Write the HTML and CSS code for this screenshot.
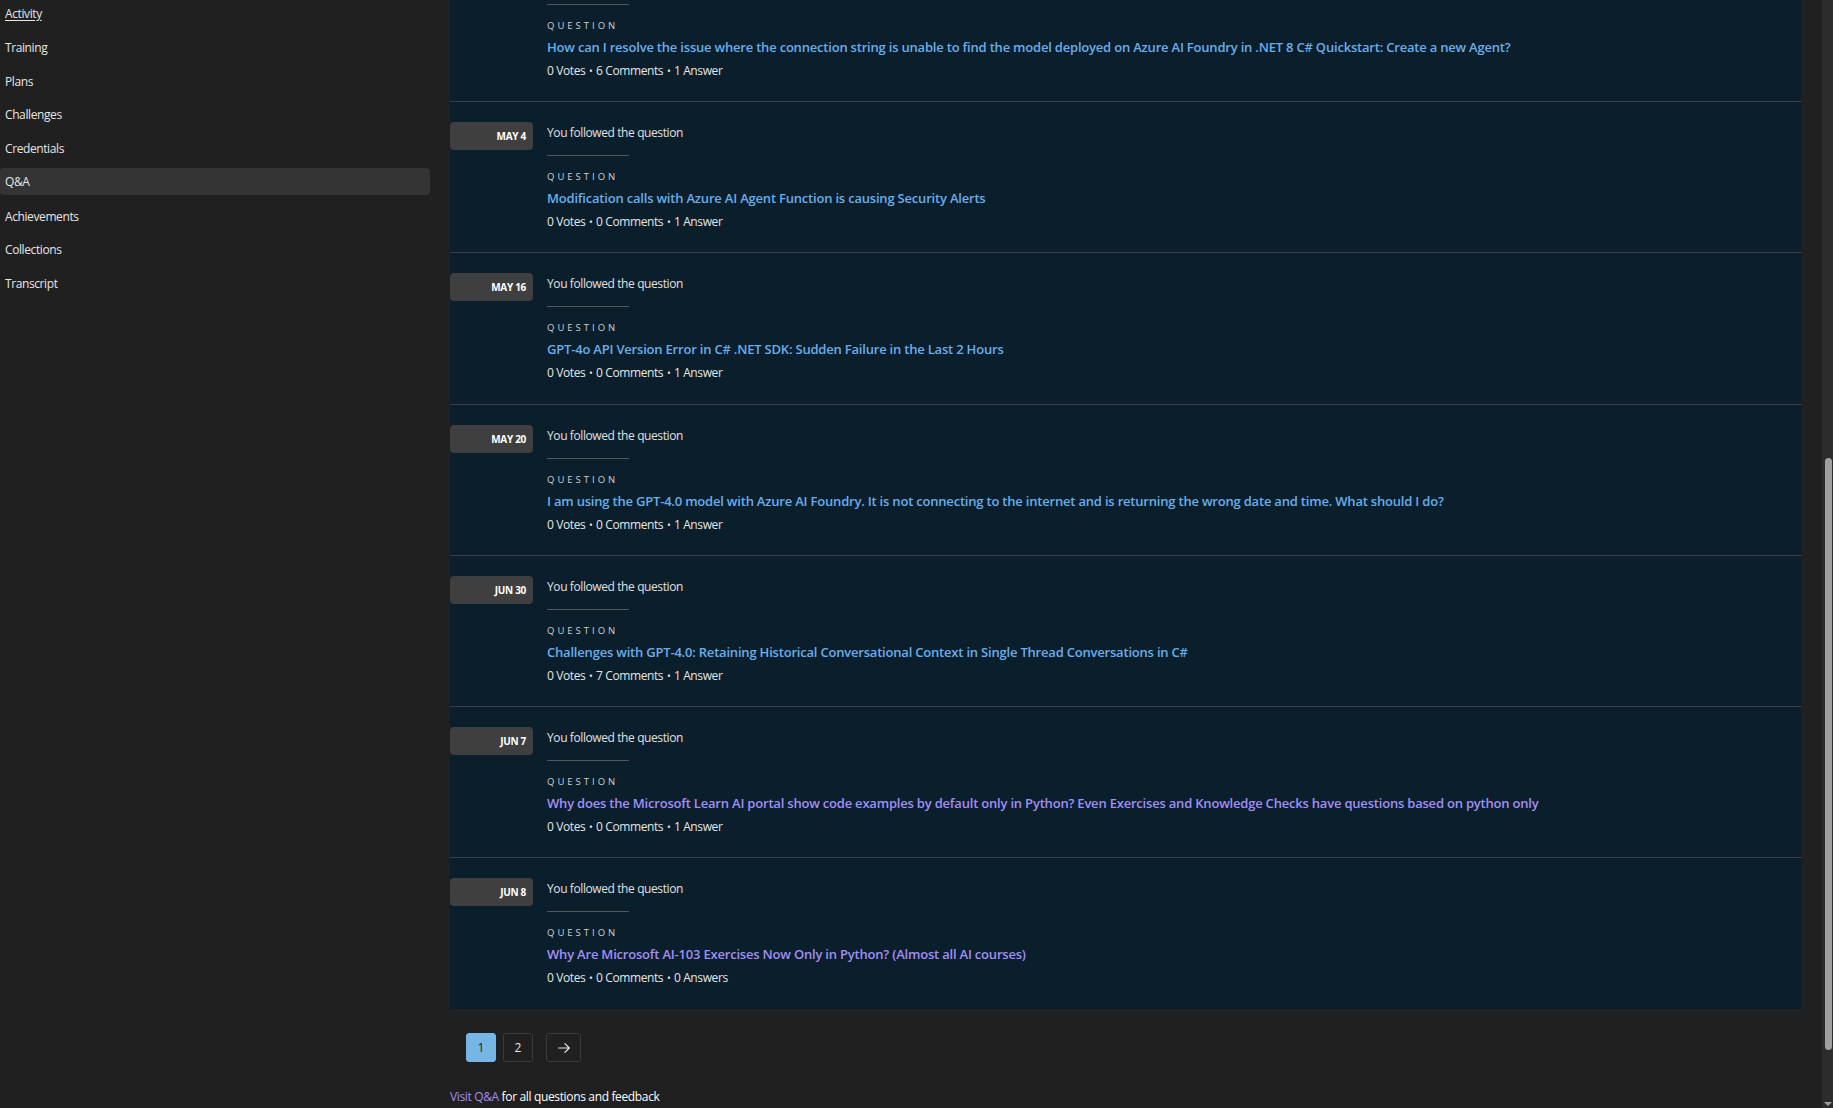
FILE: index.html
```html
<!DOCTYPE html>
<html lang="en">
<head>
  <meta charset="UTF-8" />
  <meta name="viewport" content="width=device-width, initial-scale=1.0" />
  <title>Q&amp;A Activity</title>
  <link rel="stylesheet" href="styles.css">
</head>
<body>
  <div class="layout">
    <nav class="side-nav">
      <a class="nav-item current" href="#">Activity</a>
      <a class="nav-item" href="#">Training</a>
      <a class="nav-item" href="#">Plans</a>
      <a class="nav-item" href="#">Challenges</a>
      <a class="nav-item" href="#">Credentials</a>
      <a class="nav-item selected" href="#">Q&amp;A</a>
      <a class="nav-item" href="#">Achievements</a>
      <a class="nav-item" href="#">Collections</a>
      <a class="nav-item" href="#">Transcript</a>
    </nav>

    <main class="main">
      <ul class="activity-list">
        <li class="activity">
          <div class="date-badge">MAY 1</div>
          <div class="activity-body">
            <p class="activity-action">You followed the question</p>
            <hr class="divider" />
            <p class="item-type">Question</p>
            <a class="item-title" href="#">How can I resolve the issue where the connection string is unable to find the model deployed on Azure AI Foundry in .NET 8 C# Quickstart: Create a new Agent?</a>
            <p class="item-stats">0 Votes <span class="dot">•</span> 6 Comments <span class="dot">•</span> 1 Answer</p>
          </div>
        </li>
        <li class="activity">
          <div class="date-badge">MAY 4</div>
          <div class="activity-body">
            <p class="activity-action">You followed the question</p>
            <hr class="divider" />
            <p class="item-type">Question</p>
            <a class="item-title" href="#">Modification calls with Azure AI Agent Function is causing Security Alerts</a>
            <p class="item-stats">0 Votes <span class="dot">•</span> 0 Comments <span class="dot">•</span> 1 Answer</p>
          </div>
        </li>
        <li class="activity">
          <div class="date-badge">MAY 16</div>
          <div class="activity-body">
            <p class="activity-action">You followed the question</p>
            <hr class="divider" />
            <p class="item-type">Question</p>
            <a class="item-title" href="#">GPT-4o API Version Error in C# .NET SDK: Sudden Failure in the Last 2 Hours</a>
            <p class="item-stats">0 Votes <span class="dot">•</span> 0 Comments <span class="dot">•</span> 1 Answer</p>
          </div>
        </li>
        <li class="activity">
          <div class="date-badge">MAY 20</div>
          <div class="activity-body">
            <p class="activity-action">You followed the question</p>
            <hr class="divider" />
            <p class="item-type">Question</p>
            <a class="item-title" href="#">I am using the GPT-4.0 model with Azure AI Foundry. It is not connecting to the internet and is returning the wrong date and time. What should I do?</a>
            <p class="item-stats">0 Votes <span class="dot">•</span> 0 Comments <span class="dot">•</span> 1 Answer</p>
          </div>
        </li>
        <li class="activity">
          <div class="date-badge">JUN 30</div>
          <div class="activity-body">
            <p class="activity-action">You followed the question</p>
            <hr class="divider" />
            <p class="item-type">Question</p>
            <a class="item-title" href="#">Challenges with GPT-4.0: Retaining Historical Conversational Context in Single Thread Conversations in C#</a>
            <p class="item-stats">0 Votes <span class="dot">•</span> 7 Comments <span class="dot">•</span> 1 Answer</p>
          </div>
        </li>
        <li class="activity">
          <div class="date-badge">JUN 7</div>
          <div class="activity-body">
            <p class="activity-action">You followed the question</p>
            <hr class="divider" />
            <p class="item-type">Question</p>
            <a class="item-title visited" href="#">Why does the Microsoft Learn AI portal show code examples by default only in Python? Even Exercises and Knowledge Checks have questions based on python only</a>
            <p class="item-stats">0 Votes <span class="dot">•</span> 0 Comments <span class="dot">•</span> 1 Answer</p>
          </div>
        </li>
        <li class="activity">
          <div class="date-badge">JUN 8</div>
          <div class="activity-body">
            <p class="activity-action">You followed the question</p>
            <hr class="divider" />
            <p class="item-type">Question</p>
            <a class="item-title visited" href="#">Why Are Microsoft AI-103 Exercises Now Only in Python? (Almost all AI courses)</a>
            <p class="item-stats">0 Votes <span class="dot">•</span> 0 Comments <span class="dot">•</span> 0 Answers</p>
          </div>
        </li>
      </ul>

      <nav class="pagination">
        <a class="page-btn active" href="#">1</a>
        <a class="page-btn" href="#">2</a>
        <a class="page-btn next" href="#" aria-label="Next page">
          <svg width="14" height="14" viewBox="0 0 16 16" fill="none" stroke="currentColor" stroke-width="1.4" stroke-linecap="round" stroke-linejoin="round">
            <path d="M2 8h12M9 3l5 5-5 5" />
          </svg>
        </a>
      </nav>

      <p class="footer-note"><a class="visited" href="#">Visit Q&amp;A</a> for all questions and feedback</p>
    </main>
  </div>

  <div class="scrollbar">
    <div class="scroll-thumb"></div>
    <div class="scroll-arrow"></div>
  </div>
</body>
</html>
```

FILE: styles.css
```css
body {
  font-family: "Segoe UI", "Open Sans", sans-serif;
  margin: 0;
  padding: 0;
  background: #202020;
  color: #e6e6e6;
  height: 100vh;
  overflow: hidden;
}

a {
  text-decoration: none;
}

.layout {
  display: flex;
  gap: 20px;
  width: 1802px;
}

/* Side navigation */
.side-nav {
  width: 430px;
  flex-shrink: 0;
  display: flex;
  flex-direction: column;
  gap: 6.75px;
}

.nav-item {
  display: flex;
  align-items: center;
  height: 27px;
  padding: 0 5px;
  border-radius: 4px;
  color: #e6e6e6;
  font-size: 12px;
  letter-spacing: -0.4px;
}

.nav-item.current {
  text-decoration: underline;
  text-underline-offset: 2px;
}

.nav-item.selected {
  background: #343434;
  margin: -1px 0 1px;
}

/* Activity list */
.main {
  flex: 1;
  margin-top: -49px;
}

.activity-list {
  list-style: none;
  margin: 0;
  padding: 0;
  background: #0a1e2c;
}

.activity {
  display: flex;
  gap: 14px;
  height: 151.2px;
  padding-top: 20px;
  box-sizing: border-box;
  border-bottom: 1px solid #3c3f42;
}

.activity:last-child {
  border-bottom: none;
}

.date-badge {
  width: 83px;
  height: 28px;
  flex-shrink: 0;
  box-sizing: border-box;
  padding: 0 7px;
  border-radius: 4px;
  background: #3f3f3f;
  color: #ffffff;
  font-size: 10px;
  font-weight: bold;
  letter-spacing: -0.3px;
  display: flex;
  align-items: center;
  justify-content: flex-end;
}

.activity-body {
  display: flex;
  flex-direction: column;
  align-items: flex-start;
}

.activity-action {
  margin: 0;
  font-size: 12px;
  line-height: 22px;
  letter-spacing: -0.4px;
  color: #e0e0e0;
}

.divider {
  width: 82px;
  margin: 11px 0 13px;
  border: none;
  border-top: 1px solid #555555;
}

.item-type {
  margin: 0;
  font-size: 9.5px;
  line-height: 16px;
  letter-spacing: 3px;
  text-transform: uppercase;
  color: #d0d0d0;
}

.item-title {
  margin-top: 2px;
  font-size: 13px;
  font-weight: 600;
  line-height: 22px;
  letter-spacing: -0.2px;
  color: #69aeea;
}

.item-title.visited,
.footer-note .visited {
  color: #a18ff5;
}

.item-stats {
  margin: 3px 0 0;
  font-size: 12px;
  line-height: 20px;
  letter-spacing: -0.4px;
  color: #e6e6e6;
}

.dot {
  font-size: 10px;
  padding: 0 1px;
}

/* Pagination */
.pagination {
  display: flex;
  gap: 7px;
  margin: 24px 0 0 16px;
}

.page-btn {
  width: 30px;
  height: 29px;
  box-sizing: border-box;
  border: 1px solid #3b3b3b;
  border-radius: 3px;
  color: #e6e6e6;
  font-size: 12px;
  display: flex;
  align-items: center;
  justify-content: center;
}

.page-btn.active {
  background: #75b6e7;
  border-color: #75b6e7;
  color: #1a1a1a;
}

.page-btn.next {
  width: 35px;
  margin-left: 6px;
}

.footer-note {
  margin: 25px 0 0;
  font-size: 12px;
  line-height: 20px;
  letter-spacing: -0.35px;
  color: #ffffff;
}

/* Scrollbar */
.scrollbar {
  position: fixed;
  top: 0;
  right: 0;
  width: 11px;
  height: 100%;
  background: #2c2c2c;
}

.scroll-thumb {
  position: absolute;
  top: 458px;
  left: 3px;
  width: 7px;
  height: 592px;
  border-radius: 4px;
  background: #9f9f9f;
}

.scroll-arrow {
  position: absolute;
  bottom: 2px;
  left: 2px;
  border-left: 4px solid transparent;
  border-right: 4px solid transparent;
  border-top: 4px solid #9f9f9f;
}
```
